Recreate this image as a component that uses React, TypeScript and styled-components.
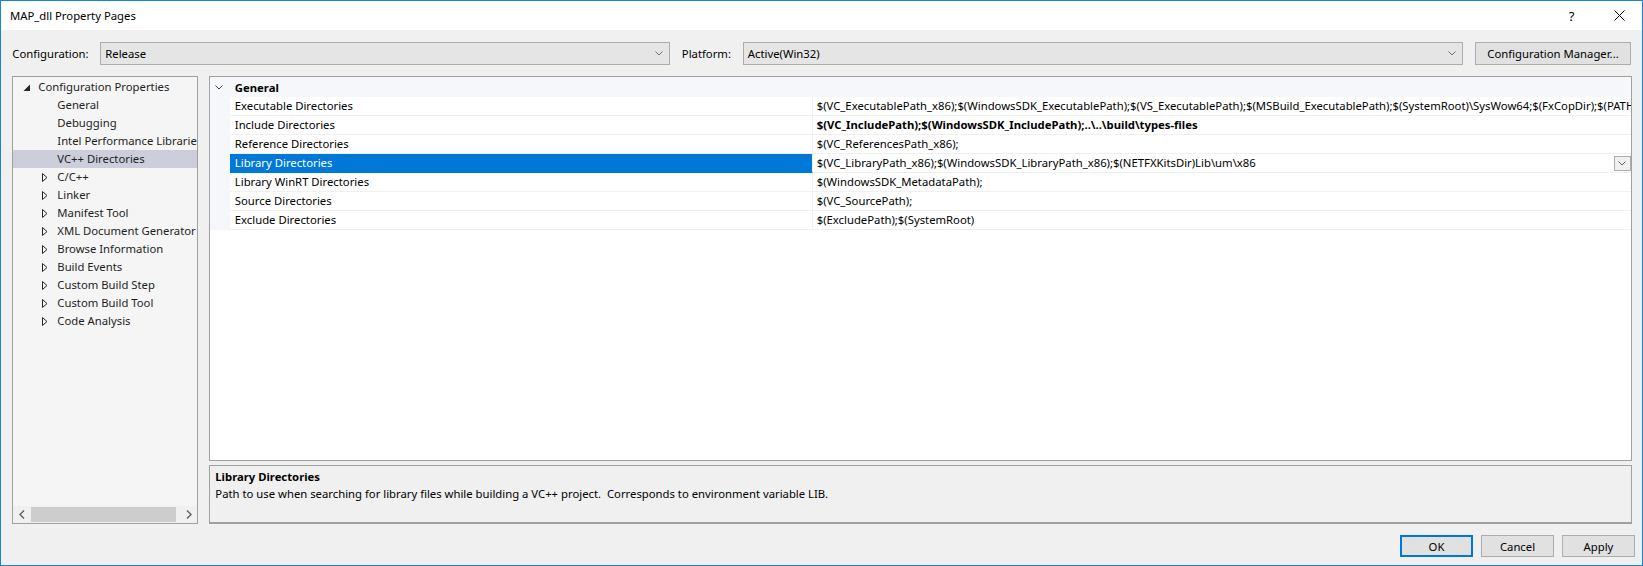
import React from "react";
import styled, { createGlobalStyle } from "styled-components";

type TreeItem = {
  label: string;
  level: number;
  expander?: "open" | "closed";
  selected?: boolean;
};

type Property = {
  name: string;
  value: string;
  bold?: boolean;
  selected?: boolean;
};

const treeItems: TreeItem[] = [
  { label: "Configuration Properties", level: 0, expander: "open" },
  { label: "General", level: 1 },
  { label: "Debugging", level: 1 },
  { label: "Intel Performance Libraries", level: 1 },
  { label: "VC++ Directories", level: 1, selected: true },
  { label: "C/C++", level: 1, expander: "closed" },
  { label: "Linker", level: 1, expander: "closed" },
  { label: "Manifest Tool", level: 1, expander: "closed" },
  { label: "XML Document Generator", level: 1, expander: "closed" },
  { label: "Browse Information", level: 1, expander: "closed" },
  { label: "Build Events", level: 1, expander: "closed" },
  { label: "Custom Build Step", level: 1, expander: "closed" },
  { label: "Custom Build Tool", level: 1, expander: "closed" },
  { label: "Code Analysis", level: 1, expander: "closed" },
];

const properties: Property[] = [
  {
    name: "Executable Directories",
    value: String.raw`$(VC_ExecutablePath_x86);$(WindowsSDK_ExecutablePath);$(VS_ExecutablePath);$(MSBuild_ExecutablePath);$(SystemRoot)\SysWow64;$(FxCopDir);$(PATH);`,
  },
  {
    name: "Include Directories",
    value: String.raw`$(VC_IncludePath);$(WindowsSDK_IncludePath);..\..\build\types-files`,
    bold: true,
  },
  { name: "Reference Directories", value: "$(VC_ReferencesPath_x86);" },
  {
    name: "Library Directories",
    value: String.raw`$(VC_LibraryPath_x86);$(WindowsSDK_LibraryPath_x86);$(NETFXKitsDir)Lib\um\x86`,
    selected: true,
  },
  { name: "Library WinRT Directories", value: "$(WindowsSDK_MetadataPath);" },
  { name: "Source Directories", value: "$(VC_SourcePath);" },
  { name: "Exclude Directories", value: "$(ExcludePath);$(SystemRoot)" },
];

const ChevronDown = ({ color = "#707070" }: { color?: string }) => (
  <svg width="8" height="5" viewBox="0 0 8 5">
    <polyline points="0.5,0.5 4,4 7.5,0.5" fill="none" stroke={color} strokeWidth="1" />
  </svg>
);

const App = () => {
  return (
    <>
      <GlobalStyle />
      <Window>
        <TitleBar>
          <Title>MAP_dll Property Pages</Title>
          <CaptionButton help>?</CaptionButton>
          <CaptionButton>
            <svg width="11" height="11" viewBox="0 0 11 11">
              <path d="M0.5 0.5 L10.5 10.5 M10.5 0.5 L0.5 10.5" stroke="#000" strokeWidth="1" />
            </svg>
          </CaptionButton>
        </TitleBar>

        <ConfigBar>
          <Label width={88}>Configuration:</Label>
          <Combo width={570}>
            <span>Release</span>
            <ChevronDown />
          </Combo>
          <Label width={61} gap={11.5}>
            Platform:
          </Label>
          <Combo>
            <span>Active(Win32)</span>
            <ChevronDown />
          </Combo>
          <ManagerButton>Configuration Manager...</ManagerButton>
        </ConfigBar>

        <Main>
          <Tree>
            <TreeList>
              {treeItems.map(item => (
                <TreeRow key={item.label} level={item.level} selected={!!item.selected}>
                  <Expander>
                    {item.expander === "open" && (
                      <svg width="7" height="7" viewBox="0 0 7 7">
                        <polygon points="7,0.5 7,7 0.5,7" fill="#262626" />
                      </svg>
                    )}
                    {item.expander === "closed" && (
                      <svg width="6" height="9" viewBox="0 0 6 9">
                        <polygon points="0.5,0.5 5,4.5 0.5,8.5" fill="none" stroke="#262626" strokeWidth="1" />
                      </svg>
                    )}
                  </Expander>
                  <TreeLabel>{item.label}</TreeLabel>
                </TreeRow>
              ))}
            </TreeList>
            <HScroll>
              <ScrollArrow>
                <svg width="6" height="9" viewBox="0 0 6 9">
                  <polyline points="5,0.5 1,4.5 5,8.5" fill="none" stroke="#606060" strokeWidth="1.4" />
                </svg>
              </ScrollArrow>
              <ScrollTrack>
                <ScrollThumb />
              </ScrollTrack>
              <ScrollArrow>
                <svg width="6" height="9" viewBox="0 0 6 9">
                  <polyline points="1,0.5 5,4.5 1,8.5" fill="none" stroke="#606060" strokeWidth="1.4" />
                </svg>
              </ScrollArrow>
            </HScroll>
          </Tree>

          <RightColumn>
            <PropertyGrid>
              <CategoryRow>
                <Gutter>
                  <ChevronDown color="#404040" />
                </Gutter>
                <CategoryTitle>General</CategoryTitle>
              </CategoryRow>
              {properties.map(prop => (
                <PropRow key={prop.name}>
                  <Gutter />
                  <NameCell selected={!!prop.selected}>{prop.name}</NameCell>
                  <ValueCell bold={!!prop.bold}>
                    <ValueText>{prop.value}</ValueText>
                    {prop.selected && (
                      <DropButton>
                        <ChevronDown color="#606060" />
                      </DropButton>
                    )}
                  </ValueCell>
                </PropRow>
              ))}
            </PropertyGrid>
            <Description>
              <DescTitle>Library Directories</DescTitle>
              <DescText>
                Path to use when searching for library files while building a VC++ project.  Corresponds to environment variable LIB.
              </DescText>
            </Description>
          </RightColumn>
        </Main>

        <Footer>
          <DialogButton primary>OK</DialogButton>
          <DialogButton>Cancel</DialogButton>
          <DialogButton>Apply</DialogButton>
        </Footer>
      </Window>
    </>
  );
};

export default App;

const GlobalStyle = createGlobalStyle`
  html, body {
    margin: 0;
    padding: 0;
    background: #f0f0f0;
  }
  body {
    font-family: "Noto Sans", "Open Sans", sans-serif;
    font-size: 11.3px;
    color: #000;
  }
  * {
    box-sizing: border-box;
  }
`;

const Window = styled.div`
  width: 1643px;
  height: 566px;
  border: 1px solid #1883d7;
  background: #f0f0f0;
  display: flex;
  flex-direction: column;
  overflow: hidden;
`;

const TitleBar = styled.div`
  height: 29px;
  background: #fff;
  display: flex;
  align-items: center;
`;

const Title = styled.div`
  flex: 1;
  padding-left: 9px;
  line-height: 29px;
`;

const CaptionButton = styled.div<{ help?: boolean }>`
  width: 45px;
  height: 29px;
  margin-right: ${({ help }) => (help ? 3 : 0)}px;
  display: flex;
  align-items: center;
  justify-content: center;
  font-size: 13px;
`;

const ConfigBar = styled.div`
  margin-top: 12px;
  height: 23px;
  padding: 0 11px 0 11.3px;
  display: flex;
  align-items: center;
`;

const Label = styled.div<{ width: number; gap?: number }>`
  width: ${({ width }) => width}px;
  margin-left: ${({ gap }) => gap || 0}px;
  flex-shrink: 0;
`;

const Combo = styled.div<{ width?: number }>`
  height: 23px;
  ${({ width }) => (width ? `width: ${width}px; flex-shrink: 0;` : "flex: 1;")}
  background: #e5e5e5;
  border: 1px solid #adadad;
  padding: 0 6px 0 4px;
  display: flex;
  align-items: center;
  justify-content: space-between;
`;

const ManagerButton = styled.div`
  margin-left: 12px;
  width: 156px;
  height: 23px;
  flex-shrink: 0;
  background: #e1e1e1;
  border: 1px solid #adadad;
  display: flex;
  align-items: center;
  justify-content: center;
`;

const Main = styled.div`
  margin-top: 11px;
  height: 448px;
  padding: 0 10.3px 0 11.3px;
  display: flex;
  gap: 11px;
`;

const Tree = styled.div`
  width: 186px;
  flex-shrink: 0;
  border: 1px solid #a0a0a0;
  background: #f5f5f5;
  display: flex;
  flex-direction: column;
`;

const TreeList = styled.div`
  flex: 1;
  padding-top: 1px;
  overflow: hidden;
`;

const TreeRow = styled.div<{ level: number; selected: boolean }>`
  height: 18px;
  padding-left: ${({ level }) => 10 + level * 19}px;
  display: flex;
  align-items: center;
  white-space: nowrap;
  background: ${({ selected }) => (selected ? "#cccedb" : "transparent")};
  color: #1e1e1e;
`;

const Expander = styled.div`
  width: 15px;
  flex-shrink: 0;
  display: flex;
  align-items: center;
`;

const TreeLabel = styled.span`
  line-height: 18px;
`;

const HScroll = styled.div`
  height: 17px;
  display: flex;
  align-items: center;
  background: #f0f0f0;
`;

const ScrollArrow = styled.div`
  width: 17px;
  height: 17px;
  display: flex;
  align-items: center;
  justify-content: center;
`;

const ScrollTrack = styled.div`
  flex: 1;
  height: 15px;
  padding-left: 1px;
  display: flex;
`;

const ScrollThumb = styled.div`
  width: 145px;
  height: 15px;
  background: #cdcdcd;
`;

const RightColumn = styled.div`
  flex: 1;
  display: flex;
  flex-direction: column;
  gap: 4px;
  min-width: 0;
`;

const PropertyGrid = styled.div`
  height: 385px;
  border: 1px solid #a0a0a0;
  background: #fff;
  overflow: hidden;
`;

const CategoryRow = styled.div`
  height: 20px;
  display: flex;
  align-items: center;
  background: #f5f7fa;
`;

const Gutter = styled.div`
  width: 19.5px;
  flex-shrink: 0;
  align-self: stretch;
  background: #f5f7fa;
  display: flex;
  align-items: center;
  padding-left: 5px;
`;

const CategoryTitle = styled.div`
  font-weight: bold;
  padding-left: 5px;
`;

const PropRow = styled.div`
  height: 19px;
  display: grid;
  grid-template-columns: 19.5px 582.9px 1fr;
`;

const NameCell = styled.div<{ selected: boolean }>`
  padding-left: 5px;
  line-height: 18px;
  white-space: nowrap;
  border-right: 1px solid #f0f0f0;
  border-bottom: 1px solid ${({ selected }) => (selected ? "#0078d7" : "#f0f0f0")};
  background: ${({ selected }) => (selected ? "#0078d7" : "#fff")};
  color: ${({ selected }) => (selected ? "#fff" : "#000")};
`;

const ValueCell = styled.div<{ bold: boolean }>`
  min-width: 0;
  padding-left: 4px;
  border-bottom: 1px solid #f0f0f0;
  display: flex;
  align-items: center;
  justify-content: space-between;
  overflow: hidden;
  font-weight: ${({ bold }) => (bold ? "bold" : "normal")};
`;

const ValueText = styled.span`
  white-space: nowrap;
  line-height: 18px;
`;

const DropButton = styled.div`
  width: 17px;
  height: 15px;
  flex-shrink: 0;
  border: 1px solid #adadad;
  background: #f0f0f0;
  display: flex;
  align-items: center;
  justify-content: center;
`;

const Description = styled.div`
  flex: 1;
  border: 1px solid #a0a0a0;
  border-bottom-width: 2px;
  background: #f0f0f0;
  padding: 1.5px 5px 0;
`;

const DescTitle = styled.div`
  font-weight: bold;
  line-height: 17px;
`;

const DescText = styled.div`
  line-height: 17px;
  white-space: pre;
`;

const Footer = styled.div`
  margin-top: 11px;
  height: 22px;
  padding-right: 7px;
  display: flex;
  justify-content: flex-end;
  gap: 8px;
`;

const DialogButton = styled.div<{ primary?: boolean }>`
  width: 73px;
  height: 22px;
  background: #e1e1e1;
  border: ${({ primary }) => (primary ? "2px solid #0078d7" : "1px solid #adadad")};
  display: flex;
  align-items: center;
  justify-content: center;
`;
